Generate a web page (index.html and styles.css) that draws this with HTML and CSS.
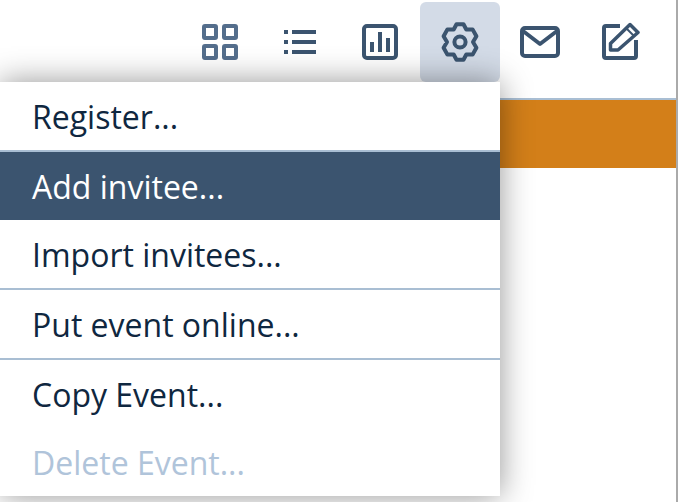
FILE: index.html
```html
<!DOCTYPE html>
<html lang="en">
<head>
<meta charset="utf-8">
<title>Event menu</title>
<link rel="stylesheet" href="styles.css">
</head>
<body>
<div class="page">
  <header class="toolbar">
    <button class="tool">
      <svg width="40" height="40" viewBox="0 0 40 40" fill="none" stroke="#546e8c" stroke-width="4"><rect x="4" y="4" width="12" height="12" rx="1"/><rect x="24" y="4" width="12" height="12" rx="1"/><rect x="4" y="24" width="12" height="12" rx="1"/><rect x="24" y="24" width="12" height="12" rx="1"/></svg>
    </button>
    <button class="tool">
      <svg width="40" height="40" viewBox="0 0 40 40" fill="#3b546f"><rect x="4" y="8" width="4" height="4"/><rect x="12" y="8" width="24" height="4"/><rect x="4" y="18" width="4" height="4"/><rect x="12" y="18" width="24" height="4"/><rect x="4" y="28" width="4" height="4"/><rect x="12" y="28" width="24" height="4"/></svg>
    </button>
    <button class="tool">
      <svg width="40" height="40" viewBox="0 0 40 40" fill="none" stroke="#3b546f" stroke-width="4"><rect x="4" y="4" width="32" height="32" rx="3"/><path d="M12 30V20M20 30V10M28 30V16"/></svg>
    </button>
    <button class="tool tool-active">
      <svg width="40" height="40" viewBox="0 0 40 40" fill="none" stroke="#3b546f" stroke-width="4" stroke-linejoin="round"><circle cx="20" cy="20" r="5.600"/><path d="M16.500 2.200H23.500L26.300 7.500L32.600 7.400L36.400 14.300L33 20L36.400 25.700L32.600 32.600L26.300 32.500L23.500 37.800H16.500L13.700 32.500L7.400 32.600L3.600 25.700L7 20L3.600 14.300L7.400 7.400L13.700 7.500Z"/></svg>
    </button>
    <button class="tool">
      <svg width="40" height="40" viewBox="0 0 40 40" fill="none" stroke="#3b546f" stroke-width="4" stroke-linejoin="round"><rect x="2" y="6" width="36" height="28" rx="3"/><path d="M3 9l17 13 17-13"/></svg>
    </button>
    <button class="tool">
      <svg width="40" height="40" viewBox="0 0 40 40" fill="none" stroke="#3b546f" stroke-width="4"><path d="M20 4H6a2 2 0 0 0-2 2v28a2 2 0 0 0 2 2h28a2 2 0 0 0 2-2V18"/><path d="M10.500 28v-6.500L30 2.500l8 8L18 28z" stroke-width="3.500" stroke-linejoin="round"/><path d="M26.500 6.500l7 7" stroke-width="2"/></svg>
    </button>
  </header>
  <main class="content">
    <div class="band"></div>
  </main>
  <ul class="menu">
    <li class="item">Register...</li>
    <li class="item item-sep item-active">Add invitee...</li>
    <li class="item">Import invitees...</li>
    <li class="item item-sep">Put event online...</li>
    <li class="item item-sep">Copy Event...</li>
    <li class="item item-disabled">Delete Event...</li>
  </ul>
</div>
</body>
</html>
```
FILE: styles.css
```css
* { box-sizing: border-box; }
html, body { margin: 0; padding: 0; background: #fff; overflow: hidden; }
.page { position: relative; width: 678px; height: 502px; font-family: "Open Sans", sans-serif; border-right: 2px solid #aaa; overflow: hidden; }
.toolbar { display: flex; justify-content: flex-end; height: 98px; padding: 2px 16px 0 0; }
.tool { width: 80px; height: 80px; padding: 0; border: 0; border-radius: 6px; background: transparent; display: flex; align-items: center; justify-content: center; }
.tool svg { display: block; }
.tool-active { background: #d3dbe7; }
.content { height: 404px; border-top: 2px solid #a9bed3; }
.band { height: 68px; background: #d37f19; }
.menu { position: absolute; left: 0; top: 82px; width: 500px; margin: 0; padding: 0; list-style: none; background: #fff; box-shadow: 0 0 30px rgba(0,0,0,.42); }
.item { height: 68px; padding-left: 32px; display: flex; align-items: center; font-size: 32px; color: #0f2740; white-space: nowrap; }
.item-sep { height: 70px; border-top: 2px solid #a9bed3; }
.item-active { background: #3b546f; color: #fff; }
.item-disabled { color: #b0c4da; }
```
